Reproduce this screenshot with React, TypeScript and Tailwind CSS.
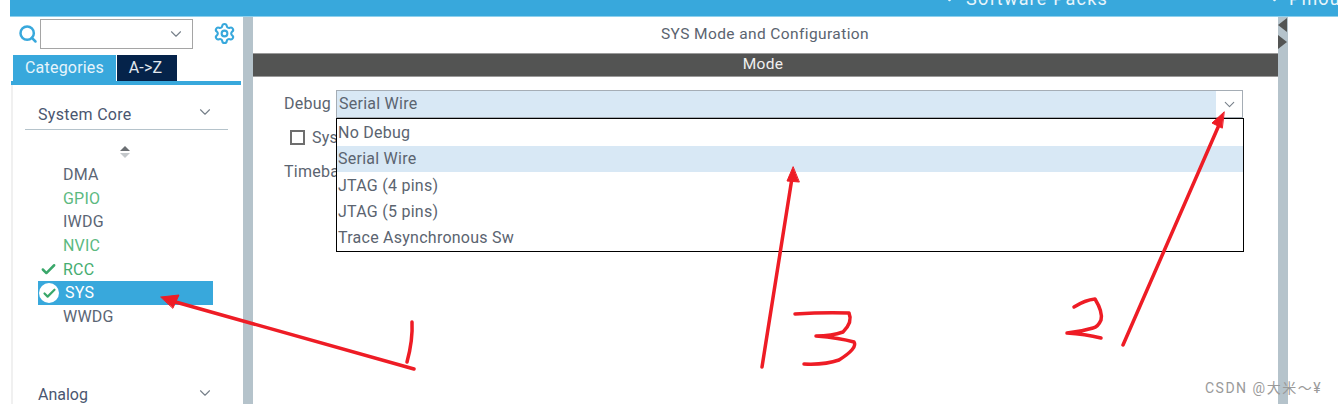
import { Check, ChevronDown, Search, Settings } from "lucide-react";

const font = { fontFamily: "Roboto, 'Noto Sans CJK SC', sans-serif" };

const peripherals = [
  { name: "DMA", color: "text-[#5b6675]" },
  { name: "GPIO", color: "text-[#5cb97f]" },
  { name: "IWDG", color: "text-[#5b6675]" },
  { name: "NVIC", color: "text-[#5cb97f]" },
  { name: "RCC", color: "text-[#45ad70]", check: true },
  { name: "SYS", color: "text-white", active: true },
  { name: "WWDG", color: "text-[#5b6675]" },
];

const options = ["No Debug", "Serial Wire", "JTAG (4 pins)", "JTAG (5 pins)", "Trace Asynchronous Sw"];

function Sidebar() {
  return (
    <div className="w-[233px] h-full shrink-0 overflow-hidden">
      <div className="flex items-center h-[29px] mt-[2px]">
        <Search size={20} strokeWidth={3} className="text-[#38a8dc] ml-[8px] shrink-0" />
        <div className="ml-[2px] w-[153px] h-[30px] border border-[#a5a5a5] flex items-center justify-end pr-[7px]">
          <ChevronDown size={18} strokeWidth={1.5} className="text-[#77808a]" />
        </div>
        <Settings size={23} strokeWidth={2.2} className="text-[#38a8dc] ml-[20px]" />
      </div>
      <div className="flex mt-[7px] ml-[3px] h-[26px] text-[16px] tracking-[0.2px]">
        <div className="w-[103px] bg-[#38a8dc] text-[#e6f4fb] flex items-center justify-center">Categories</div>
        <div className="w-[60px] ml-px bg-[#05234a] text-[#e2e8ee] flex items-center justify-center pr-[3px]">{"A->Z"}</div>
      </div>
      <div className="h-1 bg-[#38a8dc] ml-px w-[230px]" />
      <div className="ml-px w-[230px] h-[320px] border-l-2 border-[#f0f0f0] pl-[12px]">
        <div className="w-[203px] h-[45px] border-b border-[#b5c3cb] flex items-end justify-between pb-[2px] pl-[13px] pr-[14px] text-[16px] tracking-[0.3px] text-[#4a5670]">
          <span>System Core</span>
          <ChevronDown size={18} strokeWidth={1.5} className="text-[#77808a] mb-[6px]" />
        </div>
        <div className="flex flex-col items-center w-[199px] mt-[16px] h-[14px] gap-[2px]">
          <div className="w-0 h-0 border-x-[5px] border-x-transparent border-b-[5px] border-b-[#6b6f73]" />
          <div className="w-0 h-0 border-x-[5px] border-x-transparent border-t-[5px] border-t-[#c4c8cb]" />
        </div>
        <div className="mt-[3px] ml-[13px] w-[175px] flex flex-col text-[16px] tracking-[0.2px]">
          {peripherals.map((p) => (
            <div
              key={p.name}
              className={`h-[23.7px] flex items-center relative ${p.color} ${p.active ? "bg-[#38a8dc] pl-[27px]" : "pl-[25px]"}`}
            >
              {p.check && <Check size={17} strokeWidth={3.5} className="absolute left-[2px] text-[#3aa76a]" />}
              {p.active && (
                <span className="absolute left-px w-[20px] h-[20px] rounded-full bg-white flex items-center justify-center">
                  <Check size={15} strokeWidth={3.5} className="text-[#3aa76a]" />
                </span>
              )}
              {p.name}
            </div>
          ))}
        </div>
        <div className="w-[203px] mt-[54px] flex items-center justify-between pl-[13px] pr-[14px] text-[16px] text-[#4a5670]">
          <span>Analog</span>
          <ChevronDown size={18} strokeWidth={1.5} className="text-[#77808a] mb-[4px]" />
        </div>
      </div>
    </div>
  );
}

function MainPanel() {
  return (
    <div className="w-[1025px] h-full shrink-0 relative text-[16px] tracking-[0.25px] text-[#5b6470]">
      <div className="h-[36px] flex items-center justify-center text-[15.5px] tracking-[0.4px] pr-[1px]">
        SYS Mode and Configuration
      </div>
      <div className="h-[24px] bg-[#535453] border-y border-[#9a9a9a] flex items-center justify-center text-[15.5px] text-[#f0f0f0] pr-[5px]">
        Mode
      </div>
      <div className="flex items-center ml-[31px] mt-[13px] h-[28px]">
        <span className="w-[52px]">Debug</span>
        <div className="w-[907px] h-[28px] border border-[#a5adb5] flex">
          <div className="flex-1 bg-[#d8e8f5] pl-[2px] flex items-center">Serial Wire</div>
          <div className="w-[26px] flex items-center justify-center">
            <ChevronDown size={17} strokeWidth={1.5} className="text-[#77808a]" />
          </div>
        </div>
      </div>
      <div className="flex items-center ml-[37px] mt-[6px] h-[27px]">
        <div className="w-[15px] h-[15px] border-2 border-[#6e6e6e] mr-[7px]" />
        <span>Sys</span>
      </div>
      <div className="ml-[31px] mt-[7px] h-[27px] flex items-center">Timeba</div>
      {/* open list sits over the rows behind it */}
      <div className="absolute left-[83px] top-[101px] w-[908px] h-[134px] bg-white border border-black pt-px flex flex-col">
        {options.map((o, i) => (
          <div key={o} className={`h-[26.4px] flex items-center pl-[1px] ${i === 1 ? "bg-[#d8e8f5]" : ""}`}>
            {o}
          </div>
        ))}
      </div>
    </div>
  );
}

function Splitter({ arrows }: { arrows?: boolean }) {
  return (
    <div className="w-[10px] h-full bg-[#b5c3cb] shrink-0 flex flex-col gap-[3px] pt-[1px]">
      {arrows && (
        <>
          <div className="w-0 h-0 border-y-[7px] border-y-transparent border-r-[9px] border-r-[#535453]" />
          <div className="w-0 h-0 border-y-[7px] border-y-transparent border-l-[9px] border-l-[#535453]" />
        </>
      )}
    </div>
  );
}

// hand drawn red marks on top of the screenshot
function Annotations() {
  return (
    <svg className="absolute inset-0 pointer-events-none" width={1338} height={404} fill="none" stroke="#ee1c25" strokeLinecap="round" strokeLinejoin="round">
      <path d="M414 369 L172 301" strokeWidth={3.5} />
      <path d="M161 297 L179 295 L173 308 Z" fill="#ee1c25" strokeWidth={1} />
      <path d="M412 322 Q413 340 407 362" strokeWidth={3.5} />
      <path d="M762 367 L792 178" strokeWidth={3.5} />
      <path d="M793 167 L787 181 L799 182 Z" fill="#ee1c25" strokeWidth={1} />
      <path d="M795 314 Q825 312 849 313 Q853 322 843 332 Q832 336 816 336 Q840 338 854 342 Q858 348 839 360 Q825 365 804 364" strokeWidth={3.5} />
      <path d="M1123 345 L1219 125" strokeWidth={3.5} />
      <path d="M1224 112 L1212 123 L1222 128 Z" fill="#ee1c25" strokeWidth={1} />
      <path d="M1074 307 Q1085 300 1095 299 Q1103 312 1101 320 Q1098 327 1093 328 Q1080 332 1067 333 Q1085 334 1101 338" strokeWidth={3.5} />
    </svg>
  );
}

export default function App() {
  return (
    <div className="w-[1338px] h-[404px] bg-white relative overflow-hidden" style={font}>
      <div className="ml-[10px] h-[17px] bg-[#38a8dc] border-b border-[#8fd0ec] overflow-hidden flex text-[18px] text-[#e8f5fb] tracking-[1.2px]">
        <div className="ml-[933px] flex items-center gap-[10px] h-[16px] -mt-[10px]">
          <ChevronDown size={13} strokeWidth={4} className="mt-[1px]" />
          <span className="whitespace-nowrap">Software Packs</span>
        </div>
        <div className="ml-[160px] flex items-center gap-[8px] h-[16px] -mt-[10px]">
          <ChevronDown size={13} strokeWidth={4} className="mt-[1px]" />
          <span className="whitespace-nowrap">Pinout</span>
        </div>
      </div>
      <div className="ml-[10px] h-[387px] flex">
        <Sidebar />
        <Splitter />
        <MainPanel />
        <Splitter arrows />
      </div>
      <Annotations />
      <div className="absolute left-[1205px] top-[379px] text-[14px] tracking-[1.5px] text-[#9a9a9a] leading-[18px] whitespace-nowrap">CSDN @大米～¥</div>
    </div>
  );
}
